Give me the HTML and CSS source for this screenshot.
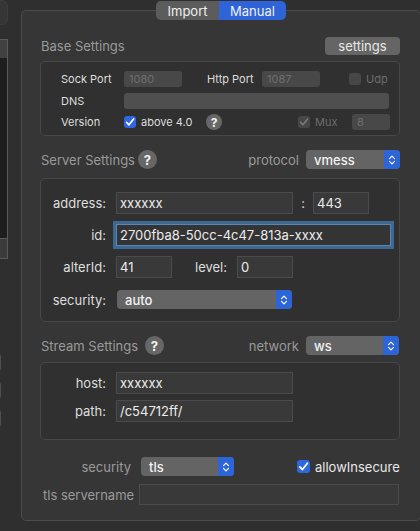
FILE: index.html
```html
<!DOCTYPE html>
<html>
<head>
<meta charset="utf-8">
<link rel="stylesheet" href="styles.css">
</head>
<body>
<div class="side">
  <div class="side-top"></div>
  <div class="side-table"><div class="th"></div><div class="tb"></div><div class="tf"></div></div>
  <div class="side-btn first"></div>
  <div class="side-btn"></div>
  <div class="side-btn"></div>
</div>
<div class="panel">
  <div class="seg"><span class="imp">Import</span><span class="man">Manual</span></div>

  <div class="hdr hdr1">
    <span class="title">Base Settings</span>
    <span class="spacer"></span>
    <span class="btn">settings</span>
  </div>
  <div class="box box1">
    <div class="r">
      <span class="bl w63">Sock Port</span>
      <span class="dfield w58">1080</span>
      <span class="bl w55 ml25">Http Port</span>
      <span class="dfield w58">1087</span>
      <span class="cb off ml29"></span>
      <span class="dis-t ml5">Udp</span>
    </div>
    <div class="r r2">
      <span class="bl w63">DNS</span>
      <span class="dfield dns w265"></span>
    </div>
    <div class="r r3">
      <span class="bl w63">Version</span>
      <span class="cb on"><svg viewBox="0 0 12 12" width="12" height="12"><path d="M2.6 6.3 L5 8.8 L9.6 3" fill="none" stroke="#fff" stroke-width="1.7" stroke-linecap="round" stroke-linejoin="round"/></svg></span>
      <span class="bl w65 ml5">above 4.0</span>
      <span class="help h16">?</span>
      <span class="cb dischk ml76"><svg viewBox="0 0 12 12" width="12" height="12"><path d="M2.6 6.3 L5 8.8 L9.6 3" fill="none" stroke="#7a7a7a" stroke-width="1.5" stroke-linecap="round" stroke-linejoin="round"/></svg></span>
      <span class="dis-t w37 ml5">Mux</span>
      <span class="dfield w38">8</span>
    </div>
  </div>

  <div class="hdr hdr2">
    <span class="title w97">Server Settings</span>
    <span class="help h19">?</span>
    <span class="spacer"></span>
    <span class="title mr7">protocol</span>
    <span class="pop w94"><span class="val">vmess</span><span class="arr"><svg viewBox="0 0 8 12" width="8" height="12"><path d="M1.5 4.6 L4 2.1 L6.5 4.6 M1.5 7.4 L4 9.9 L6.5 7.4" fill="none" stroke="#fff" stroke-width="1.2" stroke-linecap="round" stroke-linejoin="round"/></svg></span></span>
  </div>
  <div class="box box2">
    <div class="fr">
      <span class="fl">address:</span>
      <span class="field w177">xxxxxx</span>
      <span class="colon">:</span>
      <span class="field w56">443</span>
    </div>
    <div class="fr mt10">
      <span class="fl">id:</span>
      <span class="field focus w275">2700fba8-50cc-4c47-813a-xxxx</span>
    </div>
    <div class="fr mt10">
      <span class="fl">alterId:</span>
      <span class="field w56">41</span>
      <span class="fl2">level:</span>
      <span class="field w56">0</span>
    </div>
    <div class="fr pr mt12">
      <span class="fl">security:</span>
      <span class="pop w175 ml1"><span class="val">auto</span><span class="arr"><svg viewBox="0 0 8 12" width="8" height="12"><path d="M1.5 4.6 L4 2.1 L6.5 4.6 M1.5 7.4 L4 9.9 L6.5 7.4" fill="none" stroke="#fff" stroke-width="1.2" stroke-linecap="round" stroke-linejoin="round"/></svg></span></span>
    </div>
  </div>

  <div class="hdr hdr3">
    <span class="title w104">Stream Settings</span>
    <span class="help h19">?</span>
    <span class="spacer"></span>
    <span class="title mr7">network</span>
    <span class="pop w93 mr1"><span class="val">ws</span><span class="arr"><svg viewBox="0 0 8 12" width="8" height="12"><path d="M1.5 4.6 L4 2.1 L6.5 4.6 M1.5 7.4 L4 9.9 L6.5 7.4" fill="none" stroke="#fff" stroke-width="1.2" stroke-linecap="round" stroke-linejoin="round"/></svg></span></span>
  </div>
  <div class="box box3">
    <div class="fr">
      <span class="fl">host:</span>
      <span class="field w177">xxxxxx</span>
    </div>
    <div class="fr mt6">
      <span class="fl">path:</span>
      <span class="field w177">/c54712ff/</span>
    </div>
  </div>

  <div class="brow brow1">
    <span class="title blab">security</span>
    <span class="pop w93"><span class="val">tls</span><span class="arr"><svg viewBox="0 0 8 12" width="8" height="12"><path d="M1.5 4.6 L4 2.1 L6.5 4.6 M1.5 7.4 L4 9.9 L6.5 7.4" fill="none" stroke="#fff" stroke-width="1.2" stroke-linecap="round" stroke-linejoin="round"/></svg></span></span>
    <span class="cb on big ml63"><svg viewBox="0 0 12 12" width="13" height="13"><path d="M2.6 6.3 L5 8.8 L9.6 3" fill="none" stroke="#fff" stroke-width="1.6" stroke-linecap="round" stroke-linejoin="round"/></svg></span>
    <span class="bright ml5">allowInsecure</span>
  </div>
  <div class="brow brow2">
    <span class="title tlab">tls servername</span>
    <span class="field w260 h21"></span>
  </div>
</div>
</body>
</html>
```
FILE: styles.css
```css
* { box-sizing: border-box; }
html, body { margin: 0; padding: 0; }
body {
  width: 420px;
  height: 531px;
  overflow: hidden;
  background: #2f2f2f;
  display: flex;
  align-items: flex-start;
  font-family: Inter, "Noto Sans", sans-serif;
  font-size: 13px;
  color: #dedede;
}

/* left partial column */
.side { width: 21px; flex: none; display: flex; flex-direction: column; }
.side-top { width: 40px; height: 25px; margin-left: -32px; background: #363636; border: 1px solid #3e3e3e; border-radius: 6px; }
.side-table { width: 40px; height: 220px; margin-left: -32px; margin-top: 14px; border: 1px solid #5a5a5a; background: #1e1e1e; display: flex; flex-direction: column; }
.th { height: 18px; background: #414141; }
.tb { flex: 1; }
.tf { height: 20px; background: #3b3b3b; border-top: 1px solid #5a5a5a; }
.side-btn { width: 20px; height: 17px; margin-left: -19px; margin-top: 11px; background: #4f4f4f; border-radius: 3px; }
.side-btn.first { margin-top: 95px; }

/* main tab panel */
.panel {
  flex: none;
  width: 400px;
  height: 511px;
  margin-top: 10px;
  border: 1px solid #4c4c4c;
  border-radius: 5px;
  background: #363636;
  display: flex;
  flex-direction: column;
  padding: 0 20px 0 18px;
}
.seg { align-self: center; margin-top: -10px; margin-left: 2px; display: flex; height: 19px; border-radius: 5px; overflow: hidden; position: relative; }
.seg span { display: flex; align-items: center; justify-content: center; color: #f0f0f0; }
.seg .imp { width: 63px; background: #5c5c5c; }
.seg .man { width: 67px; background: #2f63d8; }

.hdr { display: flex; align-items: center; height: 19px; }
.hdr1 { margin-top: 17px; height: 18px; }
.hdr2 { margin-top: 14px; }
.hdr3 { margin-top: 14px; }
.title { color: #9a9a9a; margin-left: 1px; white-space: nowrap; }
.spacer { flex: 1; }
.btn { width: 75px; height: 18px; background: #656565; border-radius: 4px; color: #e8e8e8; display: flex; align-items: center; justify-content: center; }

.help { flex: none; border-radius: 50%; background: #676767; color: #f4f4f4; display: flex; align-items: center; justify-content: center; font-weight: 700; }
.h16 { width: 16px; height: 16px; font-size: 12px; }
.h19 { width: 19px; height: 19px; font-size: 13px; }

.box { border: 1px solid #474747; border-radius: 5px; background: #303030; flex: none; }
.box1 { margin-top: 6px; height: 75px; padding: 9px 0 0 20px; font-size: 11px; }
.box2 { margin-top: 9px; height: 144px; padding-top: 13px; }
.box3 { margin-top: 7px; height: 78px; padding-top: 9px; }

.r { display: flex; align-items: center; height: 16px; }
.r2 { margin-top: 6px; }
.r3 { margin-top: 5px; }
.bl { color: #dedede; white-space: nowrap; flex: none; }
.dis-t { color: #6c6c6c; flex: none; }
.dfield { height: 16px; background: #484848; border-radius: 3px; color: #6e6e6e; padding-left: 5px; display: flex; align-items: center; flex: none; }
.dfield.dns { background: #4f4f4f; }

.cb { width: 12px; height: 12px; border-radius: 3px; flex: none; display: flex; align-items: center; justify-content: center; }
.cb.on { background: #2f67df; }
.cb.big { width: 13px; height: 13px; }
.cb.off { background: #474747; }
.cb.dischk { background: #474747; }

.fr { display: flex; align-items: center; height: 22px; }
.fr.pr { height: 19px; }
.fl { width: 65px; text-align: right; margin-right: 10px; color: #dedede; flex: none; }
.fl2 { width: 55px; text-align: right; margin-right: 10px; color: #dedede; flex: none; }
.field { height: 22px; background: #393939; border: 1px solid #4b4b4b; color: #ececec; padding-left: 3px; display: flex; align-items: center; flex: none; white-space: nowrap; }
.field.focus { box-shadow: 0 0 0 3px #3d6894; border-color: #5a86b5; background: #343434; }
.field.h21 { height: 21px; }
.colon { width: 20px; text-align: center; color: #dedede; flex: none; }

.pop { display: flex; height: 19px; border-radius: 4px; background: #646464; overflow: hidden; flex: none; }
.pop .val { flex: 1; padding-left: 8px; color: #f2f2f2; display: flex; align-items: center; font-weight: 500; }
.pop .arr { width: 16px; background: #2d64d8; display: flex; align-items: center; justify-content: center; }

.brow { display: flex; align-items: center; flex: none; }
.brow1 { margin-top: 17px; height: 19px; }
.brow2 { margin-top: 8px; height: 21px; }
.blab { width: 90px; text-align: right; margin-right: 10px; }
.tlab { width: 99px; margin-left: 0; padding-left: 3px; }
.bright { color: #e8e8e8; }

.w37 { width: 37px; } .w38 { width: 38px; } .w55 { width: 55px; } .w56 { width: 56px; }
.w58 { width: 58px; } .w63 { width: 63px; } .w65 { width: 65px; } .w93 { width: 93px; }
.w94 { width: 94px; } .w97 { width: 97px; } .w104 { width: 104px; } .w175 { width: 175px; }
.w177 { width: 177px; } .w260 { width: 260px; } .w265 { width: 265px; } .w275 { width: 275px; }
.ml1 { margin-left: 1px; } .ml5 { margin-left: 5px; } .ml25 { margin-left: 25px; } .ml29 { margin-left: 29px; }
.ml63 { margin-left: 63px; } .ml76 { margin-left: 76px; }
.mr1 { margin-right: 1px; } .mr7 { margin-right: 7px; }
.mt6 { margin-top: 6px; } .mt10 { margin-top: 10px; } .mt12 { margin-top: 12px; }
```
